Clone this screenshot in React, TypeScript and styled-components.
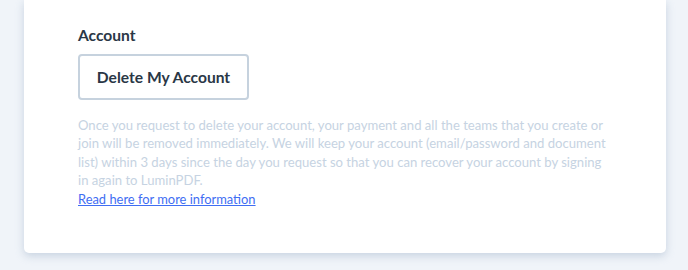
import React from "react";
import styled, { createGlobalStyle } from "styled-components";

const Global = createGlobalStyle`
  html, body { margin: 0; padding: 0; background: #f0f4f9; }
  body { font-family: "Lato", "Open Sans", sans-serif; -webkit-font-smoothing: antialiased; }
`;

const Page = styled.div`
  padding: 0 22px 18px 24px;
`;

const Card = styled.section`
  background: #ffffff;
  border-radius: 0 0 5px 5px;
  box-shadow: 0 3px 8px rgba(150, 170, 195, 0.45);
  padding: 26px 54px 45px 54px;
`;

const Title = styled.h3`
  margin: 0 0 10px 0;
  font-size: 15.6px;
  line-height: 18px;
  font-weight: 700;
  color: #2a3746;
`;

const DeleteButton = styled.button`
  display: flex;
  align-items: center;
  justify-content: center;
  width: 171px;
  height: 46px;
  background: #ffffff;
  border: 2px solid #c6d2de;
  border-radius: 4px;
  font-family: inherit;
  font-size: 15.6px;
  font-weight: 700;
  color: #2a3746;
  cursor: pointer;
  padding: 0;
`;

const Note = styled.p`
  margin: 16px 0 0 0;
  max-width: 560px;
  font-size: 13.1px;
  line-height: 18.4px;
  color: #c6d3e2;
`;

const MoreLink = styled.a`
  color: #3f6ef3;
  text-decoration: underline;
  font-size: 12.9px;
  line-height: 18px;
`;

export default function App() {
  return (
    <>
      <Global />
      <Page>
        <Card>
          <Title>Account</Title>
          <DeleteButton>Delete My Account</DeleteButton>
          <Note>
            Once you request to delete your account, your payment and all the teams that you create or
            <br />
            join will be removed immediately. We will keep your account (email/password and document
            <br />
            list) within 3 days since the day you request so that you can recover your account by signing
            <br />
            in again to LuminPDF.
            <br />
            <MoreLink href="#">Read here for more information</MoreLink>
          </Note>
        </Card>
      </Page>
    </>
  );
}
